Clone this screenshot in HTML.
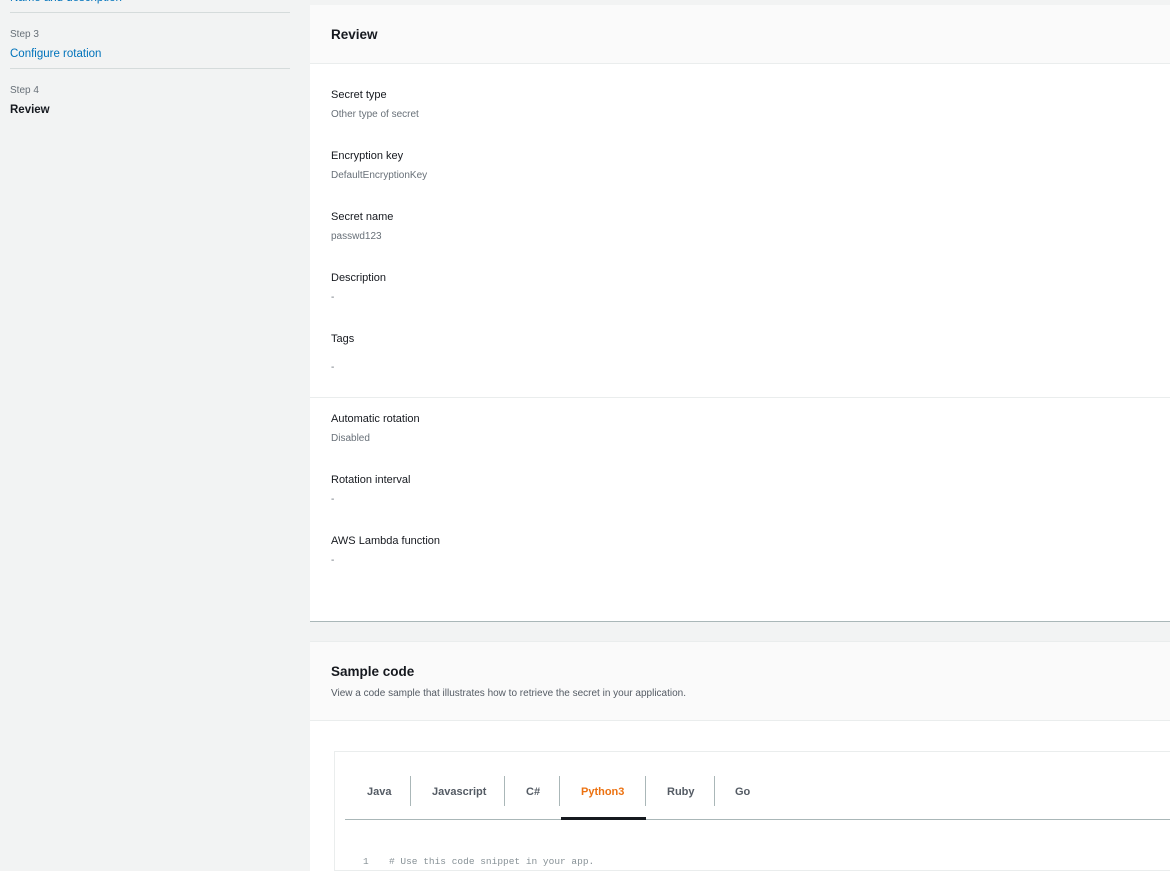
<!DOCTYPE html>
<html><head><meta charset="utf-8"><style>
*{margin:0;padding:0;box-sizing:border-box}
body{width:1170px;height:861px;overflow:hidden;background:#f2f3f3;font-family:"Liberation Sans",sans-serif;position:relative}
.a{position:absolute;white-space:nowrap}
.side-line{position:absolute;left:10px;width:280px;height:1px;background:#d5dbdb}
.step{font-size:10px;color:#687078}
.lbl{font-size:11px;color:#16191f}
.val{font-size:10px;color:#687078}
.tab{position:absolute;top:786px;font-size:11px;font-weight:bold;color:#545b64}
.sep{position:absolute;top:776px;width:1px;height:30px;background:#aab7b8}
</style></head><body>
<div class="a" style="left:10px;top:-8px;font-size:11.5px;color:#0073bb">Name and description</div>
<div class="side-line" style="top:12px"></div>
<div class="a step" style="left:10px;top:29px">Step 3</div>
<div class="a" style="left:10px;top:48px;font-size:11.5px;color:#0073bb">Configure rotation</div>
<div class="side-line" style="top:68px"></div>
<div class="a step" style="left:10px;top:85px">Step 4</div>
<div class="a" style="left:10px;top:104px;font-size:11.5px;font-weight:bold;color:#16191f">Review</div>

<div class="a" style="left:310px;top:5px;width:860px;height:617px;background:#fff;border-bottom:1px solid #aab7b8"></div>
<div class="a" style="left:310px;top:5px;width:860px;height:59px;background:#fafafa;border-bottom:1px solid #eaeded"></div>
<div class="a" style="left:331px;top:27px;font-size:13.5px;font-weight:bold;color:#16191f">Review</div>

<div class="a lbl" style="left:331px;top:89px">Secret type</div>
<div class="a val" style="left:331px;top:109px">Other type of secret</div>
<div class="a lbl" style="left:331px;top:150px">Encryption key</div>
<div class="a val" style="left:331px;top:170px">DefaultEncryptionKey</div>
<div class="a lbl" style="left:331px;top:211px">Secret name</div>
<div class="a val" style="left:331px;top:231px">passwd123</div>
<div class="a lbl" style="left:331px;top:272px">Description</div>
<div class="a val" style="left:331px;top:292px">-</div>
<div class="a lbl" style="left:331px;top:333px">Tags</div>
<div class="a val" style="left:331px;top:362px">-</div>
<div class="a" style="left:310px;top:397px;width:860px;height:1px;background:#eaeded"></div>
<div class="a lbl" style="left:331px;top:413px">Automatic rotation</div>
<div class="a val" style="left:331px;top:433px">Disabled</div>
<div class="a lbl" style="left:331px;top:474px">Rotation interval</div>
<div class="a val" style="left:331px;top:494px">-</div>
<div class="a lbl" style="left:331px;top:535px">AWS Lambda function</div>
<div class="a val" style="left:331px;top:555px">-</div>

<div class="a" style="left:310px;top:641px;width:860px;height:230px;background:#fff;border-top:1px solid #eaeded"></div>
<div class="a" style="left:310px;top:642px;width:860px;height:79px;background:#fafafa;border-bottom:1px solid #eaeded"></div>
<div class="a" style="left:331px;top:664px;font-size:13.5px;font-weight:bold;color:#16191f">Sample code</div>
<div class="a" style="left:331px;top:688px;font-size:10px;color:#545b64">View a code sample that illustrates how to retrieve the secret in your application.</div>

<div class="a" style="left:334px;top:751px;width:840px;height:120px;border:1px solid #eaeded;background:#fff"></div>
<div class="tab" style="left:367px">Java</div>
<div class="sep" style="left:410px"></div>
<div class="tab" style="left:432px">Javascript</div>
<div class="sep" style="left:504px"></div>
<div class="tab" style="left:526px">C#</div>
<div class="sep" style="left:559px"></div>
<div class="tab" style="left:581px;color:#ec7211">Python3</div>
<div class="sep" style="left:645px"></div>
<div class="tab" style="left:667px">Ruby</div>
<div class="sep" style="left:714px"></div>
<div class="tab" style="left:735px">Go</div>
<div class="a" style="left:345px;top:819px;width:830px;height:1px;background:#aab7b8"></div>
<div class="a" style="left:561px;top:817px;width:85px;height:3px;background:#16191f"></div>
<div class="a" style="left:363px;top:856px;font-family:'Liberation Mono',monospace;font-size:9.5px;color:#879196">1</div>
<div class="a" style="left:389px;top:856px;font-family:'Liberation Mono',monospace;font-size:9.5px;color:#879196"># Use this code snippet in your app.</div>
</body></html>
